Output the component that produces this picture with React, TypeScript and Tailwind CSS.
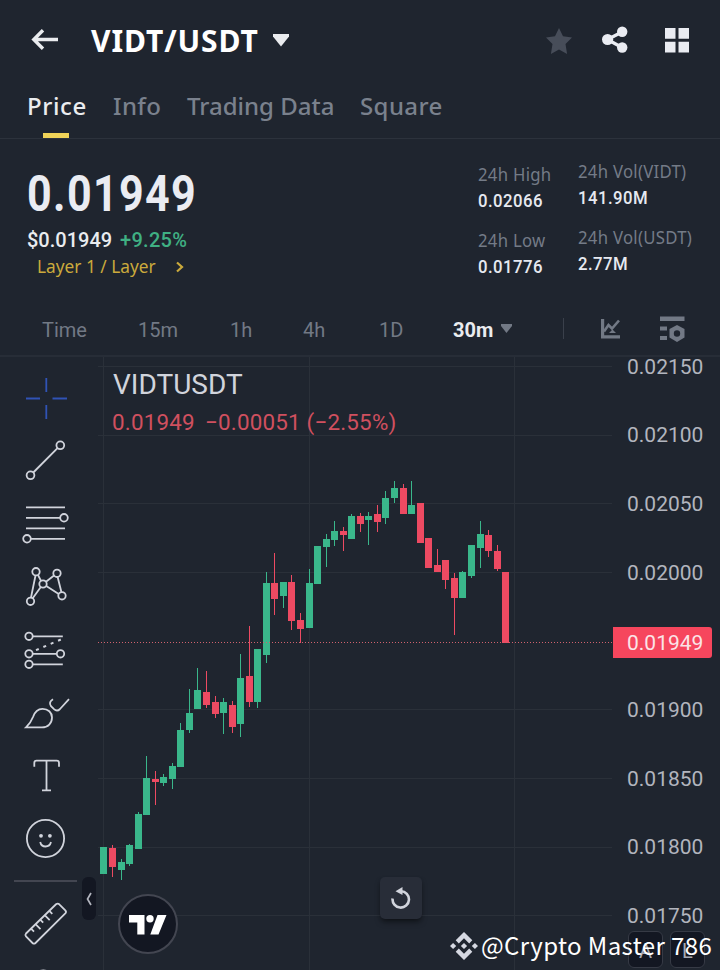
import React from "react";

type Candle = {
  x: number;
  high: number;
  top: number;
  bottom: number;
  low: number;
  up: boolean;
};

const c = (x: number, high: number, top: number, bottom: number, low: number, up = false): Candle => ({
  x,
  high,
  top,
  bottom,
  low,
  up,
});

const candles: Candle[] = [
  c(100, 847, 847, 874, 874, true),
  c(109, 845, 848, 867, 877),
  c(118, 859, 862, 870, 880, true),
  c(126, 844, 845, 864, 866, true),
  c(135, 812, 814, 849, 849, true),
  c(143, 756, 778, 815, 815, true),
  c(152, 771, 779, 782, 805),
  c(160, 774, 777, 783, 786, true),
  c(169, 763, 766, 779, 789, true),
  c(177, 723, 730, 767, 767, true),
  c(186, 689, 713, 730, 733, true),
  c(194, 668, 690, 709, 709, true),
  c(203, 671, 692, 705, 708),
  c(212, 696, 702, 714, 718),
  c(220, 698, 702, 713, 734, true),
  c(229, 701, 705, 727, 733),
  c(237, 654, 678, 724, 737, true),
  c(246, 626, 676, 702, 707),
  c(254, 649, 649, 702, 708, true),
  c(263, 572, 583, 655, 663, true),
  c(271, 553, 583, 599, 615),
  c(280, 582, 582, 596, 608, true),
  c(288, 575, 582, 621, 630),
  c(297, 613, 620, 629, 643),
  c(306, 569, 583, 628, 628, true),
  c(314, 546, 546, 584, 584, true),
  c(323, 534, 539, 547, 567, true),
  c(331, 521, 531, 540, 546, true),
  c(340, 527, 531, 535, 551),
  c(348, 514, 516, 539, 539, true),
  c(357, 513, 516, 524, 532),
  c(365, 512, 516, 520, 545, true),
  c(374, 505, 514, 522, 532),
  c(382, 491, 498, 518, 524, true),
  c(391, 481, 488, 498, 503, true),
  c(400, 484, 488, 514, 514),
  c(408, 481, 505, 514, 514, true),
  c(417, 503, 503, 543, 543),
  c(425, 538, 538, 568, 568),
  c(434, 549, 565, 572, 572),
  c(442, 560, 560, 580, 589),
  c(451, 573, 578, 598, 635),
  c(459, 571, 572, 598, 598, true),
  c(468, 545, 545, 576, 578, true),
  c(477, 521, 534, 548, 568, true),
  c(485, 530, 535, 551, 557),
  c(494, 545, 551, 569, 571),
  c(502, 572, 572, 643, 643),
];

const gridY = [366, 435, 503, 572, 709, 778, 847, 915];
const gridX = [103, 309, 514];

const prices = ["0.02150", "0.02100", "0.02050", "0.02000", "0.01949", "0.01900", "0.01850", "0.01800", "0.01750"];

function ToolIcon({ children, className = "text-[#d1d4dc]" }: { children: React.ReactNode; className?: string }) {
  return (
    <div className="flex h-[63px] shrink-0 items-center pl-[22px]">
      <svg
        width="48"
        height="48"
        viewBox="0 0 48 48"
        fill="none"
        stroke="currentColor"
        strokeWidth="1.8"
        className={className}
      >
        {children}
      </svg>
    </div>
  );
}

function Toolbar() {
  return (
    <div className="relative w-[98px] shrink-0 overflow-hidden pt-[9px]">
      {/* Crosshair */}
      <ToolIcon className="text-[#3053b5]">
        <path d="M24.3 4v14M24.3 31v14M4 24.5h14M30.5 24.5h14.5" />
      </ToolIcon>
      {/* Trend line */}
      <ToolIcon>
        <circle cx="38.3" cy="8.3" r="3.9" />
        <circle cx="8.5" cy="38.3" r="3.9" />
        <path d="M11.3 35.5 35.5 11.1" />
      </ToolIcon>
      {/* Fib retracement */}
      <ToolIcon>
        <path d="M4 7.3h39M4 17.8h34M4 28.3h39M9 38.8h34" />
        <circle cx="42" cy="17.8" r="3.8" />
        <circle cx="5" cy="38.8" r="3.8" />
      </ToolIcon>
      {/* Pattern */}
      <ToolIcon>
        <circle cx="14" cy="8.7" r="3.7" />
        <circle cx="35" cy="10.3" r="3.7" />
        <circle cx="21" cy="21" r="3.7" />
        <circle cx="40" cy="32.8" r="3.7" />
        <circle cx="8.5" cy="38.3" r="3.7" />
        <path d="M13.5 12.5 9 34.5M16 12 19 17.8M18.8 24 10.7 35.2M24 18.8 32 12.5M24.3 23 36.7 31M35.6 14 39.4 29" />
      </ToolIcon>
      {/* Prediction */}
      <ToolIcon>
        <circle cx="7" cy="10.3" r="3.7" />
        <circle cx="7" cy="27.8" r="3.7" />
        <circle cx="38.5" cy="27.8" r="3.7" />
        <circle cx="7" cy="38.3" r="3.7" />
        <path d="M10.8 10.3h30M10.8 27.8h24M10.8 38.3h30" />
        <path d="M14 24.2 41 12.6" strokeWidth="2" strokeDasharray="3 5" />
      </ToolIcon>
      {/* Brush */}
      <ToolIcon>
        <path d="M4 38.4H20C26 38.4 30 34 30 28.5C30 23.5 26 19.8 20.5 19.8C15.5 19.8 12.5 23.5 11 28C9.5 32 7.5 35 4 38.4Z" />
        <path d="M31 10.2C28 12 27 14.5 29 17.2L32 20.2C34 22 36 22 38 20L47 10.2" />
      </ToolIcon>
      {/* Text */}
      <ToolIcon>
        <path d="M12.3 14.8V11Q12.3 8.7 14.6 8.7H34.7Q37 8.7 37 11V14.8M24.5 8.7V38.3M20 38.3H29" />
      </ToolIcon>
      {/* Emoji */}
      <ToolIcon>
        <circle cx="23.5" cy="23.5" r="18.6" />
        <circle cx="19" cy="20.8" r="1.9" fill="currentColor" stroke="none" />
        <circle cx="27.9" cy="20.8" r="1.9" fill="currentColor" stroke="none" />
        <path d="M18.2 27C19.5 33 27.5 33 29 27" />
      </ToolIcon>
      <div className="mt-[10px] ml-[14px] h-[2px] w-[63px] bg-[#434651]" />
      <div className="mt-[10px]">
        {/* Ruler */}
        <ToolIcon>
          <path d="M4 33.5 34 4.3Q35.7 3 37.3 4.3L43.3 10.3Q44.7 11.8 43.3 13.3L13.5 43Q12 44.3 10.5 43L4 36.5Q2.7 35 4 33.5Z" />
          <path d="M9 28.7 12 31.7M13.5 24.2 18.5 29.2M18.2 19.7 21.2 22.7M22.7 15.2 27.7 20.2M27.3 10.8 30.3 13.8" />
        </ToolIcon>
        {/* Zoom */}
        <ToolIcon>
          <circle cx="21.3" cy="21" r="13.5" />
        </ToolIcon>
      </div>
    </div>
  );
}

function Chart() {
  return (
    <svg width="515" height="613" viewBox="98 357 515 613" className="block shrink-0" shapeRendering="crispEdges">
      {gridY.map((y) => (
        <rect key={y} x="98" y={y} width="514" height="1" fill="#2a3039" />
      ))}
      {gridX.map((x) => (
        <rect key={x} x={x} y="357" width="1" height="613" fill="#2a3039" />
      ))}
      {candles.map((k) => (
        <g key={k.x} fill={k.up ? "#3ab78b" : "#ed4a62"}>
          <rect x={k.x + 3} y={k.high} width="1" height={k.low - k.high} />
          <rect x={k.x} y={k.top} width="7" height={k.bottom - k.top} />
        </g>
      ))}
      <path d="M98 642.5H613" stroke="#d0626e" strokeWidth="1" strokeDasharray="1 2" />
    </svg>
  );
}

function Stat({ label, value }: { label: string; value: string }) {
  return (
    <div className="h-[66px] whitespace-nowrap">
      <div className="origin-left scale-x-[0.93] font-['Noto_Sans',sans-serif] text-[18px] leading-[24px] tracking-[0.3px] text-[#747b87]">
        {label}
      </div>
      <div className="mt-[2px] origin-left scale-x-[0.93] text-[18px] font-medium leading-[26px] tracking-[0.5px] text-[#e6e9f0]">
        {value}
      </div>
    </div>
  );
}

export default function App() {
  return (
    <div className="relative flex h-[970px] w-[720px] flex-col overflow-hidden bg-[#1f252f] font-[Roboto,sans-serif]">
      {/* Header */}
      <header className="flex h-[80px] shrink-0 items-center">
        <svg width="28" height="24" viewBox="31 28 28 24" className="ml-[31px]" fill="none" stroke="#eaecef" strokeWidth="3.4">
          <path d="M58 39.5H34M43 30.3 33.8 39.5 43 48.7" />
        </svg>
        <h1 className="ml-[32px] mt-[2px] w-[172px] whitespace-nowrap font-['Noto_Sans',sans-serif] text-[30px] font-bold leading-[40px] tracking-[0.9px] text-white">
          VIDT/USDT
        </h1>
        <svg width="16" height="13" viewBox="0 0 16 13" className="ml-[10px]" fill="#eaecef">
          <path d="M0 0h16v2.5L8 12.5 0 2.5Z" />
        </svg>
        <svg width="28" height="28" viewBox="0 0 28 28" className="ml-[256px] mt-px" fill="#474d59">
          <path d="M14 1 18 9.3 27 10.5 20.5 16.9 22.1 27 14 22.5 5.9 27 7.5 16.9 1 10.5 10 9.3Z" />
        </svg>
        <svg width="28" height="28" viewBox="0 0 28 28" className="ml-[28px]" fill="#eaecf2">
          <path d="M6.5 13.5 21 6M6.5 13.5 21 21.5" stroke="#eaecf2" strokeWidth="3.2" />
          <circle cx="6.6" cy="13.5" r="5.6" />
          <circle cx="21.2" cy="5.8" r="5.2" />
          <circle cx="21.2" cy="21.5" r="5.2" />
        </svg>
        <svg width="24" height="25" viewBox="0 0 24 25" className="ml-[35.5px]" fill="#eaecf2">
          <path d="M0 0h10.5v10.8H0ZM13.5 0H24v10.8H13.5ZM0 13.8h10.5v10.8H0ZM13.5 13.8H24v10.8H13.5Z" />
        </svg>
      </header>

      {/* Tabs */}
      <nav className="flex h-[59px] shrink-0 whitespace-nowrap border-b border-[#2c323c] pl-[27px] font-['Noto_Sans',sans-serif] text-[24px] font-medium leading-[52px] text-[#7a818d]">
        <div className="flex w-[86px] flex-col">
          <span className="h-[53px] tracking-[0.6px] text-[#eaecef]">Price</span>
          <span className="ml-[16px] h-[5px] w-[26px] shrink-0 bg-[#f0d358]" />
        </div>
        <span className="w-[74px] tracking-[0.4px]">Info</span>
        <span className="w-[173px]">Trading Data</span>
        <span className="tracking-[0.4px]">Square</span>
      </nav>

      {/* Ticker */}
      <section className="flex h-[161px] shrink-0 whitespace-nowrap">
        <div className="w-[478px] pl-[27px] pt-[28px]">
          <div className="origin-left scale-x-[0.86] text-[50px] font-bold leading-[54px] tracking-[1.6px] text-[#eaecf2]">
            0.01949
          </div>
          <div className="mt-[6px] flex text-[20px] font-medium leading-[26px]">
            <span className="w-[93px] text-[#eaecef]">$0.01949</span>
            <span className="tracking-[0.3px] text-[#3fb083]">+9.25%</span>
          </div>
          <div className="ml-[10px] flex items-center font-['Noto_Sans',sans-serif] text-[18px] leading-[27px] text-[#cbaa3c]">
            <span className="w-[139px] origin-left scale-x-[0.96]">Layer 1 / Layer</span>
            <svg width="8" height="12" viewBox="0 0 8 12" fill="none" stroke="currentColor" strokeWidth="2.2">
              <path d="M1 1.5 6 6 1 10.5" />
            </svg>
          </div>
        </div>
        <div className="w-[100px] pt-[23px]">
          <Stat label="24h High" value="0.02066" />
          <Stat label="24h Low" value="0.01776" />
        </div>
        <div className="pt-[20px]">
          <Stat label="24h Vol(VIDT)" value="141.90M" />
          <Stat label="24h Vol(USDT)" value="2.77M" />
        </div>
      </section>

      {/* Intervals */}
      <div className="flex h-[57px] shrink-0 items-center whitespace-nowrap border-b-2 border-[#272d37] pb-px pl-[42px] pt-[5px] text-[20px] text-[#727985]">
        <span className="w-[96px]">Time</span>
        <span className="w-[92px]">15m</span>
        <span className="w-[73px]">1h</span>
        <span className="w-[76px]">4h</span>
        <span className="w-[74px]">1D</span>
        <span className="w-[48px] font-bold text-[#eaecef]">30m</span>
        <svg width="11" height="9" viewBox="0 0 11 9" className="-mt-[2px]" fill="#727985">
          <path d="M0 0h11v2L5.5 9 0 2Z" />
        </svg>
        <div className="-mt-[2px] ml-[51px] h-[21px] w-px bg-[#3a404b]" />
        <svg width="20" height="20" viewBox="0 0 20 20" className="-mt-[2px] ml-[37px]" fill="none" stroke="#727985" strokeWidth="3.2">
          <path d="M1.6 0V17.8H19" />
          <path d="M3 12.5 7.5 6 11 9.5 18 1.5" strokeWidth="2.6" />
          <path d="M8 14 11.5 10.5 15 14Z" fill="#727985" stroke="none" />
        </svg>
        <svg width="26" height="26" viewBox="0 0 26 26" className="-mt-[2px] ml-[39px]" fill="#727985">
          <path d="M0 0.5h24.5v4.5H0ZM0 10.5h7v4H0ZM0 20h7v4H0Z" />
          <path
            fillRule="evenodd"
            d="M17 9 24.5 13V21.5L17 26 9.5 21.5V13ZM17 14.3A3.2 3.2 0 1 0 17 20.7 3.2 3.2 0 1 0 17 14.3Z"
          />
        </svg>
      </div>

      {/* Chart area */}
      <main className="relative flex h-[613px] shrink-0">
        <Toolbar />
        <Chart />
        <div className="-mt-[24px] w-[99px] shrink-0 text-[21px] text-[#b2b5be]">
          {prices.map((price) => (
            <div key={price} className="flex h-[68.7px] items-center">
              {price === "0.01949" ? (
                <span className="h-[31px] w-[99px] rounded-r-[3px] bg-[#f6465d] pl-[14px] leading-[32px] text-[#fbe4e7]">
                  {price}
                </span>
              ) : (
                <span className="pl-[14px]">{price}</span>
              )}
            </div>
          ))}
        </div>

        {/* Legend */}
        <div className="absolute left-[112px] top-[11px] whitespace-nowrap">
          <div className="pl-px text-[28px] leading-[34px] text-[#d1d4dc]">VIDTUSDT</div>
          <div className="mt-[3px] flex text-[22.4px] leading-[34px] tracking-[0.2px] text-[#d0505f]">
            <span className="w-[93px]">0.01949</span>
            <span>−0.00051 (−2.55%)</span>
          </div>
        </div>

        {/* Collapse handle */}
        <div className="absolute left-[82px] top-[520px] flex h-[43px] w-[14px] items-center justify-center rounded-md bg-[#131722]">
          <svg width="6" height="14" viewBox="0 0 6 14" fill="none" stroke="#b2b5be" strokeWidth="1.7">
            <path d="M5 1 1.5 7 5 13" />
          </svg>
        </div>

        {/* TradingView badge */}
        <div className="absolute left-[118px] top-[537px] flex h-[60px] w-[60px] items-center justify-center rounded-full border-2 border-[#434651] bg-[#131722]">
          <svg width="38" height="20" viewBox="0 0 38 20" className="mt-[2px]" fill="#fff">
            <path d="M0 0h15.5v19.5H8.3V7.5H0ZM28.5 0h9L29.5 19.5h-8.2Z" />
            <circle cx="21" cy="3.8" r="3.7" />
          </svg>
        </div>

        {/* Reset */}
        <button className="absolute left-[380px] top-[520px] flex h-[42px] w-[42px] items-center justify-center rounded-[5px] bg-[#282d38] shadow-md shadow-black/40">
          <svg width="20" height="22" viewBox="0 0 20 22" fill="none" stroke="#d1d4dc" strokeWidth="2.6">
            <path d="M1.6 11.5A8.2 8.2 0 1 0 10 4.2" />
            <path d="M4.5 4.2 11.5 0V8Z" fill="#d1d4dc" stroke="none" />
          </svg>
        </button>

        {/* Scale buttons */}
        <div className="absolute left-[628px] top-[574px] flex gap-[7px] text-[20px] leading-[38px] text-[#a6a9b2]">
          <span className="h-[37px] w-[35px] rounded-md border border-[#363a45] bg-[#131722] text-center">A</span>
          <span className="h-[37px] w-[35px] rounded-md border border-[#363a45] bg-[#131722] text-center">L</span>
        </div>
      </main>

      {/* Author tag */}
      <div className="absolute left-[450px] top-[930px] flex items-center whitespace-nowrap font-['Noto_Sans_CJK_SC',sans-serif] text-[24px] leading-[32px] tracking-[0.4px] text-white">
        <svg width="28" height="28" viewBox="0 0 28 28" fill="#d6d9e2">
          <path d="M14 0 22.3 8.3 19.2 11.4 14 6.2 8.8 11.4 5.7 8.3ZM14 28 22.3 19.7 19.2 16.6 14 21.8 8.8 16.6 5.7 19.7ZM14 10.9 17.1 14 14 17.1 10.9 14ZM3.1 10.9 6.2 14 3.1 17.1 0 14ZM24.9 10.9 28 14 24.9 17.1 21.8 14Z" />
        </svg>
        <span className="ml-[3px] -mt-px">@Crypto Master 786</span>
      </div>
    </div>
  );
}
